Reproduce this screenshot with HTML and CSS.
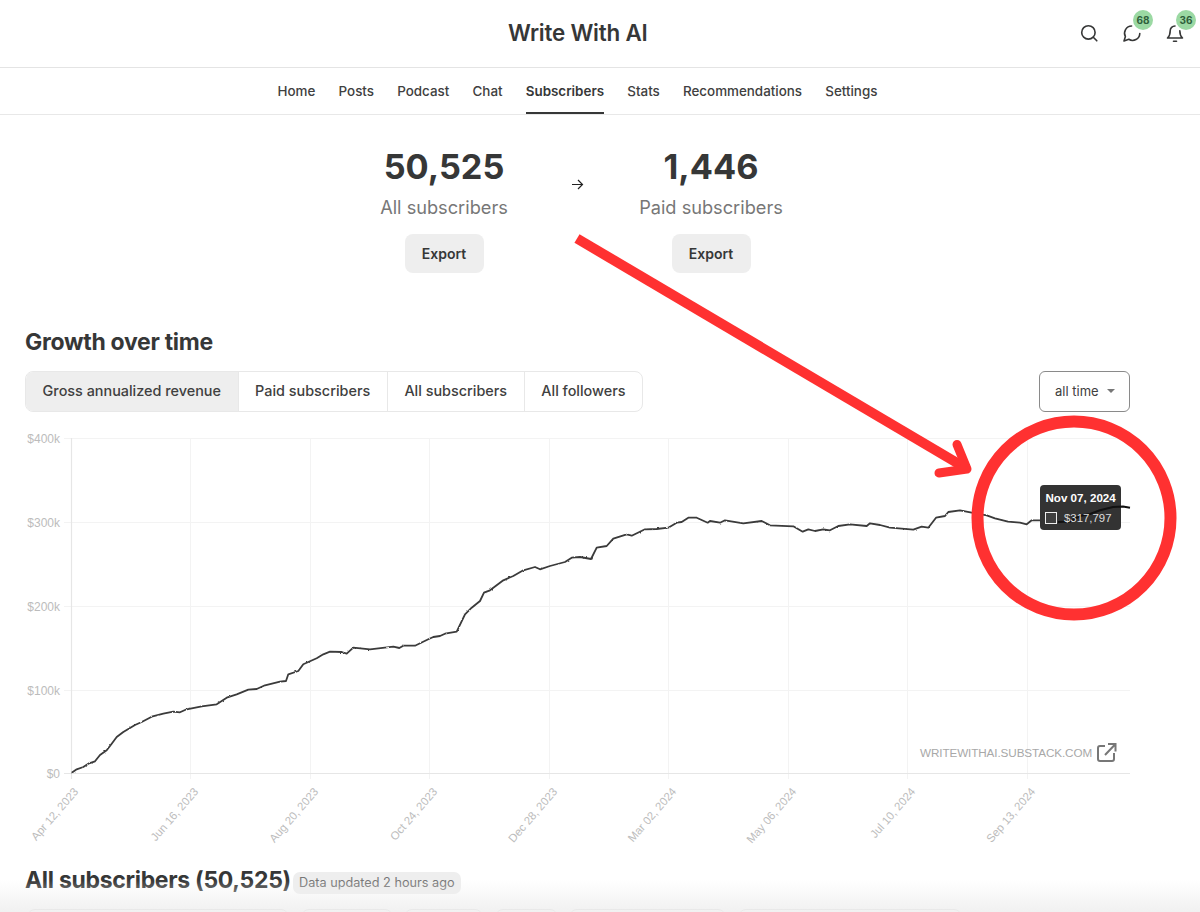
FILE: index.html
```html
<!DOCTYPE html>
<html lang="en">
<head>
    <meta charset="UTF-8">
    <title>Subscribers - Write With AI</title>
    <link rel="stylesheet" href="styles.css">
</head>
<body>
    <header class="topbar">
        <div class="site-title">Write With AI</div>
        <div class="topbar-icons">
            <span class="icon-btn">
                <svg width="20" height="20" viewBox="0 0 20 20" fill="none" stroke="#363737" stroke-width="1.600" stroke-linecap="round"><circle cx="9.400" cy="9.400" r="6.700"/><path d="M14.300 14.300l3.500 3.500"/></svg>
            </span>
            <span class="icon-btn">
                <svg width="20" height="20" viewBox="0 0 20 20" fill="none" stroke="#363737" stroke-width="1.600" stroke-linecap="round" stroke-linejoin="round"><path d="M17.800 10.500a7.200 7.200 0 0 1-11 5.800L2 18l1.400-4.400A7.200 7.200 0 0 1 9.600 3"/></svg>
                <span class="badge">68</span>
            </span>
            <span class="icon-btn">
                <svg width="20" height="20" viewBox="0 0 20 20" fill="none" stroke="#363737" stroke-width="1.600" stroke-linecap="round" stroke-linejoin="round"><path d="M10 3a4.800 4.800 0 0 0-4.800 4.800c0 3.800-.8 5.600-2.700 7.200h15c-1.900-1.600-2.700-3.400-2.700-7.200"/><path d="M8.500 18.200h3"/></svg>
                <span class="badge">36</span>
            </span>
        </div>
    </header>

    <nav class="tabs-nav">
        <a>Home</a>
        <a>Posts</a>
        <a>Podcast</a>
        <a>Chat</a>
        <a class="active">Subscribers</a>
        <a>Stats</a>
        <a>Recommendations</a>
        <a>Settings</a>
    </nav>

    <section class="stats">
        <div class="stat">
            <div class="stat-number">50,525</div>
            <div class="stat-label">All subscribers</div>
            <button class="export-btn">Export</button>
        </div>
        <div class="stat-arrow">
            <svg width="13" height="11" viewBox="0 0 13 11" fill="none" stroke="#222" stroke-width="1.200"><path d="M1 5.500h10.500M7 1l4.500 4.500L7 10"/></svg>
        </div>
        <div class="stat">
            <div class="stat-number">1,446</div>
            <div class="stat-label">Paid subscribers</div>
            <button class="export-btn">Export</button>
        </div>
    </section>

    <section class="growth">
        <h2 class="section-title">Growth over time</h2>
        <div class="growth-controls">
            <div class="segments">
                <div class="segment active">Gross annualized revenue</div>
                <div class="segment">Paid subscribers</div>
                <div class="segment">All subscribers</div>
                <div class="segment">All followers</div>
            </div>
            <div class="range-select">all time <span class="caret"></span></div>
        </div>
    </section>

    <svg class="chart" width="1200" height="435" viewBox="0 425 1200 435">
        <defs>
            <filter id="rough" x="-2%" y="-5%" width="104%" height="110%">
                <feTurbulence type="fractalNoise" baseFrequency="0.35" numOctaves="1" seed="4"/>
                <feDisplacementMap in="SourceGraphic" scale="2.200" xChannelSelector="R" yChannelSelector="G"/>
            </filter>
        </defs>
        <g class="grid">
            <path d="M64 437.500H1130M64 521.500H1130M64 605.500H1130M64 689.500H1130"/>
            <path d="M190.500 437V778M310.500 437V778M429.500 437V778M549.500 437V778M668.500 437V778M788.500 437V778M907.500 437V778M1027.500 437V778"/>
        </g>
        <path class="axis" d="M71.500 437V778M64 772.500H1130"/>
        <g class="y-labels">
            <text x="60" y="442">$400k</text>
            <text x="60" y="526">$300k</text>
            <text x="60" y="610">$200k</text>
            <text x="60" y="694">$100k</text>
            <text x="60" y="777">$0</text>
        </g>
        <g class="x-labels">
            <text transform="translate(79 791) rotate(-49)">Apr 12, 2023</text>
            <text transform="translate(199 791) rotate(-49)">Jun 16, 2023</text>
            <text transform="translate(319 791) rotate(-49)">Aug 20, 2023</text>
            <text transform="translate(438 791) rotate(-49)">Oct 24, 2023</text>
            <text transform="translate(558 791) rotate(-49)">Dec 28, 2023</text>
            <text transform="translate(677 791) rotate(-49)">Mar 02, 2024</text>
            <text transform="translate(797 791) rotate(-49)">May 06, 2024</text>
            <text transform="translate(916 791) rotate(-49)">Jul 10, 2024</text>
            <text transform="translate(1036 791) rotate(-49)">Sep 13, 2024</text>
        </g>
        <text class="watermark" x="920" y="756">WRITEWITHAI.SUBSTACK.COM</text>
        <g class="share-icon">
            <path d="M1105 745h-5a2 2 0 0 0-2 2v11a2 2 0 0 0 2 2h12a2 2 0 0 0 2-2v-6"/>
            <path d="M1105 754l10.500-11M1108 743h7.500v7.500"/>
        </g>
        <polyline class="line" filter="url(#rough)" points="71.700,771.700 76.700,768.300 83.300,766 88.300,762.700 95,760.300 100,754 106.700,749.300 111.700,742.700 116.700,736 123.300,731 135,724 141.700,721 151.700,715.700 163.300,712.700 173.300,710.700 180,711.300 186.700,708.300 201.700,705.300 216.700,703.300 226.700,696.700 236.700,693.300 248.300,688.700 256.700,688 265,684.300 280,680.700 286,680 288.300,673.300 298.300,670 303.300,663.300 316.700,657.300 323.300,653.300 330,650.700 341.700,651 346.700,652.700 353.300,646.700 370,648.300 393.300,645.700 399.300,647 403.300,644.700 415,644.700 428.300,638.300 433.300,636 440,635 445,632.700 456.700,630.700 465,613.300 471.700,606.700 480,600 484,591.700 490,589.300 503.300,579.300 513.300,575 523.300,569.300 535,566 540,568.300 550,565 565,561 571.700,556.700 580,556 591,558 596.700,546.700 606.700,545 613.300,537.700 626.700,533.300 631.700,534.700 645,528.300 656.700,528 668.300,526.700 676.700,521.700 681.700,521 688.300,516.700 696.700,516.700 707.700,521.700 710,520 720,521.700 725,519.300 743.300,522.300 761.700,520 770,524.300 793.300,525.300 802.700,530.700 808.300,528.300 815,530 823.300,528.300 830,529.300 838.300,525 850,523.300 866.700,525 870,522.300 880,524 890,526.700 913.300,528.700 921.700,525.700 928.300,526.700 936,516.700 945,515 948.300,511 960,509.300 971.700,511.700 986.700,514.300 995,517.300 1008,520.700 1020,521.700 1026.700,523.300 1031.700,519.300 1040,519.300"/>
        <rect class="tip-box" x="1040" y="484" width="81" height="45" rx="4"/>
        <polyline class="line line-hover" points="1058,521 1070,520.500 1080,515 1090,513 1100,509.300 1113,506 1123,505.500 1130,506.700"/>
        <text class="tip-date" x="1045.500" y="501">Nov 07, 2024</text>
        <rect class="tip-swatch" x="1045.500" y="511.500" width="11" height="11"/>
        <text class="tip-value" x="1064" y="520.500">$317,797</text>
    </svg>

    <section class="all-subs">
        <div class="all-subs-head">
            <h2 class="section-title">All subscribers (50,525)</h2>
            <span class="updated">Data updated 2 hours ago</span>
        </div>
        <div class="chips">
            <div class="chip chip-search"></div>
            <div class="chip chip-a"></div>
            <div class="chip chip-b"></div>
            <div class="chip chip-c"></div>
            <div class="chip chip-d"></div>
            <div class="chip chip-e"></div>
        </div>
    </section>

    <div class="bottom-fade"></div>

    <svg class="annotation" width="1200" height="912" viewBox="0 0 1200 912">
        <path class="arrow-shaft" d="M577 238.500L964 467"/>
        <path class="arrow-head" d="M957 444.500L967 469L939 473"/>
        <circle class="ring" cx="1074" cy="518" r="96.500"/>
    </svg>
</body>
</html>
```

FILE: styles.css
```css
html, body {
    margin: 0;
    padding: 0;
    height: 912px;
    overflow: hidden;
    background-color: #fff;
    color: #363737;
    font-family: 'Inter', 'Liberation Sans', sans-serif;
}

body {
    position: relative;
}

.topbar {
    display: flex;
    align-items: center;
    justify-content: space-between;
    height: 65px;
    padding: 0 15px 2px 508px;
    border-bottom: 1px solid #e4e4e4;
}

.site-title {
    font-size: 22.400px;
    font-weight: 600;
    letter-spacing: -0.2px;
}

.topbar-icons {
    display: flex;
    gap: 23px;
}

.icon-btn {
    position: relative;
    display: block;
    width: 20px;
    height: 20px;
}

.badge {
    position: absolute;
    top: -13px;
    left: 11px;
    width: 20px;
    height: 20px;
    border-radius: 50%;
    background-color: #9bd9a3;
    color: #2f5f3b;
    font-size: 10px;
    font-weight: 700;
    line-height: 20px;
    text-align: center;
}

.tabs-nav {
    display: flex;
    justify-content: center;
    gap: 23.200px;
    height: 46px;
    padding-right: 45px;
    box-shadow: 0 1px 0 #e8e8e8;
}

.tabs-nav a {
    display: block;
    padding-top: 14px;
    height: 46px;
    box-sizing: border-box;
    font-size: 13.400px;
    font-weight: 500;
    line-height: 18px;
    color: #404040;
}

.tabs-nav a.active {
    font-weight: 600;
    color: #363737;
    border-bottom: 2px solid #363737;
}

.stats {
    display: grid;
    grid-template-columns: 200px 67px 200px;
    justify-content: center;
    width: 1155px;
    padding-top: 33px;
    height: 180px;
}

.stat {
    text-align: center;
}

.stat-number {
    font-size: 34.300px;
    font-weight: 700;
    line-height: 40px;
}

.stat-label {
    margin-top: 8px;
    font-size: 18.200px;
    line-height: 24px;
    color: #777;
}

.export-btn {
    display: block;
    margin: 15px auto 0;
    width: 79px;
    height: 39px;
    border: none;
    border-radius: 8px;
    background-color: #eee;
    color: #363737;
    font-family: inherit;
    font-size: 14px;
    font-weight: 600;
}

.stat-arrow {
    display: flex;
    justify-content: center;
    padding-top: 31.500px;
}

.growth {
    padding: 0 70px 0 25px;
}

.section-title {
    margin: 0;
    font-size: 23px;
    font-weight: 700;
    line-height: 30px;
    letter-spacing: -0.3px;
}

.growth-controls {
    display: flex;
    justify-content: space-between;
    margin-top: 14px;
}

.segments {
    display: flex;
    height: 41px;
    box-sizing: border-box;
    border: 1px solid #e8e8e8;
    border-radius: 8px;
    overflow: hidden;
}

.segment {
    padding: 0 16.600px;
    border-left: 1px solid #e8e8e8;
    font-size: 14.400px;
    font-weight: 500;
    line-height: 38px;
    color: #404040;
}

.segment:first-child {
    border-left: none;
}

.segment.active {
    background-color: #eee;
}

.range-select {
    display: flex;
    align-items: center;
    gap: 8px;
    width: 91px;
    height: 41px;
    box-sizing: border-box;
    padding: 0 0 2px 15px;
    border: 1px solid #8a8a8a;
    border-radius: 6px;
    font-size: 13px;
    color: #404040;
}

.caret {
    width: 0;
    height: 0;
    border-left: 4px solid transparent;
    border-right: 4px solid transparent;
    border-top: 4px solid #777;
}

.chart {
    display: block;
    margin-top: 14px;
}

.grid path {
    fill: none;
    stroke: #f3f3f3;
    stroke-width: 1;
}

.axis {
    fill: none;
    stroke: #e6e6e6;
    stroke-width: 1.200;
}

.y-labels text {
    fill: #bcbcbc;
    font-family: 'Liberation Sans', sans-serif;
    font-size: 12px;
    text-anchor: end;
}

.x-labels text {
    fill: #bcbcbc;
    font-family: 'Liberation Sans', sans-serif;
    font-size: 11.400px;
    text-anchor: end;
}

.watermark {
    fill: #a8a8a8;
    font-family: 'Liberation Sans', sans-serif;
    font-size: 11.700px;
    letter-spacing: -0.1px;
}

.share-icon path {
    fill: none;
    stroke: #777;
    stroke-width: 2;
}

.line {
    fill: none;
    stroke: #3a3a3a;
    stroke-width: 1.800;
    stroke-linejoin: round;
}

.line-hover {
    stroke: #111;
    stroke-width: 2;
}

.tip-box {
    fill: #333;
}

.tip-date {
    fill: #fff;
    font-family: 'Liberation Sans', sans-serif;
    font-size: 11.600px;
    font-weight: 700;
}

.tip-swatch {
    fill: #3f3f3f;
    stroke: #eee;
    stroke-width: 1;
}

.tip-value {
    fill: #ddd;
    font-family: 'Liberation Sans', sans-serif;
    font-size: 11.400px;
}

.all-subs {
    padding: 0 0 0 25px;
    margin-top: 4px;
}

.all-subs-head {
    display: flex;
    align-items: center;
    gap: 2px;
}

.updated {
    padding: 0 6px;
    margin-top: 6px;
    border-radius: 7px;
    background-color: #eee;
    color: #777;
    font-size: 12.700px;
    line-height: 22px;
}

.chips {
    display: flex;
    gap: 11.500px;
    margin-top: 14px;
    padding-left: 2px;
}

.chip {
    height: 36px;
    box-sizing: border-box;
    border: 1px solid #d5d5d5;
    border-radius: 8px;
    background-color: #fff;
}

.chip-search { width: 262px; }
.chip-a { width: 92px; }
.chip-b { width: 79px; }
.chip-c { width: 63px; }
.chip-d { width: 157px; }
.chip-e { width: 224px; }

.bottom-fade {
    position: absolute;
    left: 0;
    right: 0;
    bottom: 0;
    height: 32px;
    background: linear-gradient(rgba(238, 238, 238, 0), rgba(238, 238, 238, 0.85));
}

.annotation {
    position: absolute;
    top: 0;
    left: 0;
}

.arrow-shaft {
    fill: none;
    stroke: #ff3131;
    stroke-width: 10;
}

.arrow-head {
    fill: none;
    stroke: #ff3131;
    stroke-width: 9;
    stroke-linecap: round;
    stroke-linejoin: round;
}

.ring {
    fill: none;
    stroke: #ff3131;
    stroke-width: 12;
}
```
